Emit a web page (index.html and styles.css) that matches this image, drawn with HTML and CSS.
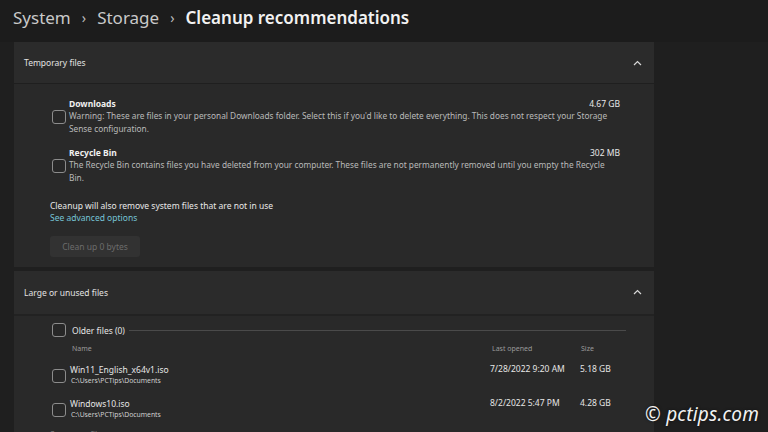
FILE: index.html
```html
<!DOCTYPE html>
<html>
<head>
<meta charset="utf-8">
<link rel="stylesheet" href="styles.css">
</head>
<body>
<div class="page">
  <div class="crumbs">
    <span class="crumb">System</span>
    <span class="sep">›</span>
    <span class="crumb">Storage</span>
    <span class="sep">›</span>
    <span class="crumb current">Cleanup recommendations</span>
  </div>
  <div class="panel">
    <section class="card">
      <div class="card-head">
        <span>Temporary files</span>
        <svg class="chev" width="9" height="6" viewBox="0 0 9 6"><path d="M1 5 L4.5 1.5 L8 5" fill="none" stroke="#d8d8d8" stroke-width="1.2"/></svg>
      </div>
      <div class="card-body temp">
        <div class="item">
          <span class="box"></span>
          <div class="item-text">
            <div class="item-top"><b>Downloads</b><span class="amount">4.67 GB</span></div>
            <p class="desc">Warning: These are files in your personal Downloads folder. Select this if you'd like to delete everything. This does not respect your Storage Sense configuration.</p>
          </div>
        </div>
        <div class="item">
          <span class="box"></span>
          <div class="item-text">
            <div class="item-top"><b>Recycle Bin</b><span class="amount">302 MB</span></div>
            <p class="desc">The Recycle Bin contains files you have deleted from your computer. These files are not permanently removed until you empty the Recycle Bin.</p>
          </div>
        </div>
        <div class="note">
          <div>Cleanup will also remove system files that are not in use</div>
          <a class="link">See advanced options</a>
        </div>
        <div class="btn">Clean up 0 bytes</div>
      </div>
    </section>
    <section class="card second">
      <div class="card-head tall">
        <span>Large or unused files</span>
        <svg class="chev" width="9" height="6" viewBox="0 0 9 6"><path d="M1 5 L4.5 1.5 L8 5" fill="none" stroke="#d8d8d8" stroke-width="1.2"/></svg>
      </div>
      <div class="card-body large">
        <div class="group">
          <span class="box big"></span>
          <span class="group-label">Older files (0)</span>
          <span class="rule"></span>
        </div>
        <div class="row cols">
          <span class="c-name">Name</span>
          <span class="c-date">Last opened</span>
          <span class="c-size">Size</span>
        </div>
        <div class="row file">
          <span class="box"></span>
          <div class="c-name">
            <div class="fname">Win11_English_x64v1.iso</div>
            <div class="fpath">C:\Users\PCTips\Documents</div>
          </div>
          <span class="c-date">7/28/2022 9:20 AM</span>
          <span class="c-size">5.18 GB</span>
        </div>
        <div class="row file">
          <span class="box"></span>
          <div class="c-name">
            <div class="fname">Windows10.iso</div>
            <div class="fpath">C:\Users\PCTips\Documents</div>
          </div>
          <span class="c-date">8/2/2022 5:47 PM</span>
          <span class="c-size">4.28 GB</span>
        </div>
        <div class="more">See more files</div>
      </div>
    </section>
  </div>
  <div class="mark">© pctips.com</div>
</div>
</body>
</html>
```
FILE: styles.css
```css
* { box-sizing: border-box; }
html, body { margin: 0; padding: 0; }
body {
  background: #1f1f1f;
  font-family: "Noto Sans", "Open Sans", sans-serif;
  color: #e6e6e6;
  width: 768px;
  height: 432px;
  overflow: hidden;
}
.page { position: relative; height: 432px; }
.crumbs {
  height: 42px;
  display: flex;
  align-items: center;
  padding: 0 0 8px 13px;
  font-size: 17px;
  color: #c9c9c9;
  background: #1c1c1c;
}
.sep { font-size: 14px; margin: 0 11px; color: #bdbdbd; }
.current { color: #f2f2f2; font-weight: 600; }
.panel { width: 640px; margin-left: 14px; display: flex; flex-direction: column; gap: 4px; background: #1f1f1f; }
.card { background: #292929; }
.card-head {
  height: 42px;
  display: flex;
  align-items: center;
  justify-content: space-between;
  padding: 0 12px 0 10px;
  font-size: 8.5px;
  color: #e2e2e2;
  background: #2b2b2b;
  border-bottom: 1px solid #1f1f1f;
}
.card-head.tall { height: 45px; border-bottom: 2px solid #222; padding-bottom: 1px; }
.chev { display: block; }
.card-body { padding: 14px 34px 0 38px; }
.temp { height: 183px; }
.item { display: flex; align-items: center; gap: 3px; margin-bottom: 12px; }
.box {
  width: 14px; height: 14px;
  border: 1px solid #8c8c8c;
  border-radius: 3px;
  background: #272727;
  flex: none;
}
.item-text { flex: 1; }
.item-top { display: flex; justify-content: space-between; font-size: 8.5px; line-height: 12px; color: #f0f0f0; }
.item-top b { font-weight: 700; }
.amount { color: #e8e8e8; }
.desc { margin: 0; font-size: 8.3px; line-height: 12.5px; color: #b9b9b9; }
.note { font-size: 8.5px; line-height: 12px; color: #e8e8e8; margin-top: 16px; margin-left: -2px; }
.link { color: #76c4d6; display: block; }
.btn {
  margin-top: 12px;
  margin-left: -2px;
  width: 90px; height: 21px;
  background: #323232;
  border-radius: 3px;
  font-size: 8.5px;
  color: #6c6c6c;
  display: flex; align-items: center; justify-content: center;
}
.large { padding: 7px 0 0 38px; }
.group { display: flex; align-items: center; height: 14px; gap: 6px; }
.group-label { font-size: 8.5px; color: #e4e4e4; }
.rule { flex: none; width: 497px; height: 1px; background: #4a4a4a; margin-left: -2px; }
.row { display: flex; }
.cols { align-items: center; margin-top: 4px; height: 14px; font-size: 7px; color: #9a9a9a; padding-left: 20px; }
.cols .c-name { width: 420px; }
.cols .c-date { width: 89px; }
.file { align-items: flex-start; margin-top: 9px; height: 24px; font-size: 8.5px; color: #e6e6e6; }
.file + .file { margin-top: 10px; }
.file .box { margin-right: 4px; margin-top: 5px; }
.file .c-name { width: 420px; }
.file .c-date { width: 90px; line-height: 11px; margin-top: -1px; }
.file .c-size { line-height: 11px; margin-top: -1px; }
.fname { line-height: 11px; }
.fpath { font-size: 6.8px; line-height: 11px; color: #d0d0d0; padding-left: 1px; }
.more { margin-top: 7px; margin-left: -2px; font-size: 8.5px; line-height: 11px; color: #777; }
.mark {
  position: absolute;
  left: 645px;
  top: 401px;
  font-size: 19px;
  font-style: italic;
  color: #f2f2f2;
  letter-spacing: 0.2px;
  text-shadow: 0 0 3px rgba(0,0,0,0.6);
}
```
